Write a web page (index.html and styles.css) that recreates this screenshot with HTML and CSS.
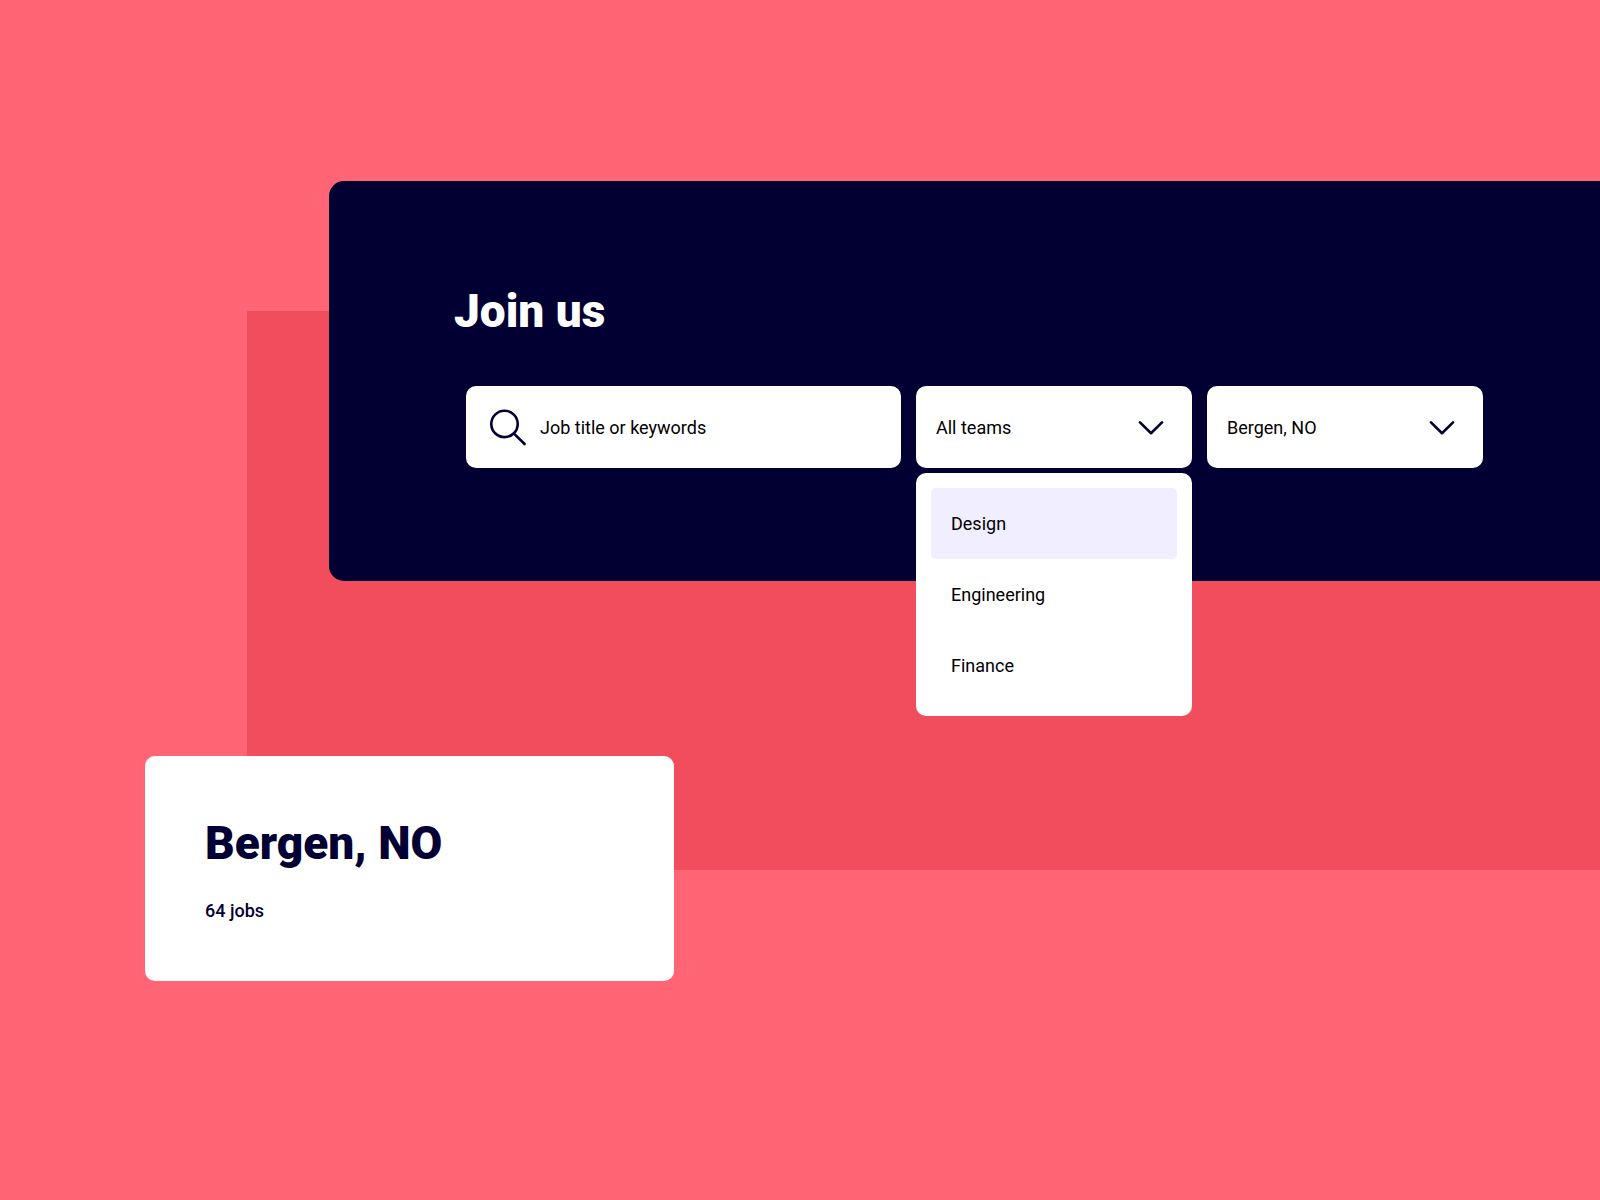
FILE: index.html
```html
<!DOCTYPE html>
<html lang="en">
<head>
    <meta charset="UTF-8">
    <meta name="viewport" content="width=device-width, initial-scale=1.0">
    <title>Join us</title>
    <link rel="stylesheet" href="styles.css">
</head>
<body>
    <main class="page">
        <div class="backdrop"></div>

        <section class="hero">
            <h1 class="title">Join us</h1>
            <form class="filters">
                <label class="field search">
                    <svg class="search-icon" viewBox="0 0 36 36" aria-hidden="true">
                        <circle cx="14.5" cy="14.9" r="13.2"/>
                        <path d="M24 24.6L34.6 35"/>
                    </svg>
                    <input type="text" placeholder="Job title or keywords" aria-label="Job title or keywords">
                </label>

                <div class="dropdown">
                    <label class="field select">
                        <select aria-label="Team">
                            <option>All teams</option>
                            <option>Design</option>
                            <option>Engineering</option>
                            <option>Finance</option>
                        </select>
                        <svg class="chevron" viewBox="0 0 26 16" aria-hidden="true">
                            <path d="M2 3.4L13 14.2L24 3.4"/>
                        </svg>
                    </label>
                    <ul class="menu">
                        <li><button type="button" class="option active">Design</button></li>
                        <li><button type="button" class="option">Engineering</button></li>
                        <li><button type="button" class="option">Finance</button></li>
                    </ul>
                </div>

                <div class="dropdown">
                    <label class="field select">
                        <select aria-label="Location">
                            <option>Bergen, NO</option>
                        </select>
                        <svg class="chevron" viewBox="0 0 26 16" aria-hidden="true">
                            <path d="M2 3.4L13 14.2L24 3.4"/>
                        </svg>
                    </label>
                </div>
            </form>
        </section>

        <section class="card">
            <h2 class="title">Bergen, NO</h2>
            <p class="card-count">64 jobs</p>
        </section>
    </main>
</body>
</html>
```
FILE: styles.css
```css
* {
    box-sizing: border-box;
}
body {
    font-family: Roboto, Arial, sans-serif;
    font-size: 18px;
    margin: 0;
    background-color: #ff6575;
    color: #000;
}
.page {
    display: grid;
    grid-template-columns: 145px 102px 82px 345px 1fr;
    grid-template-rows: 130px auto 175px 114px auto;
    padding: 181px 0 60px;
}
.backdrop {
    grid-column: 3 / -1;
    grid-row: 2 / 5;
    background-color: #f24d5c;
}
.hero {
    grid-column: 4 / -1;
    grid-row: 1 / 3;
    z-index: 1;
    padding: 103px 117px 113px 125px;
    background-color: #020033;
    border-radius: 15px 0 0 15px;
}
.title {
    margin: 0;
    font-size: 46px;
    line-height: 54px;
    font-weight: 900;
}
.hero .title {
    color: white;
}
.filters {
    display: flex;
    gap: 15px;
    margin: 48px 0 0 12px;
}
.field {
    height: 82px;
    background-color: white;
    border-radius: 10px;
}
.field input,
.field select {
    width: 100%;
    height: 100%;
    border: none;
    outline: none;
    background: none;
    font: inherit;
    color: inherit;
}
.search {
    flex: 1;
    display: flex;
    align-items: center;
    gap: 14px;
    padding: 0 24px;
}
.search input {
    min-width: 0;
    padding: 0;
}
.search input::placeholder {
    color: #000;
    opacity: 1;
}
.search-icon {
    flex: none;
    width: 36px;
    height: 36px;
    overflow: visible;
}
.search-icon,
.chevron {
    fill: none;
    stroke: #020033;
    stroke-width: 2.6;
    stroke-linecap: round;
    stroke-linejoin: round;
}
.dropdown {
    position: relative;
    flex: 0 0 276px;
}
.select {
    display: grid;
    align-items: center;
}
.select select {
    grid-area: 1 / 1;
    appearance: none;
    padding: 0 60px 0 20px;
    cursor: pointer;
}
.chevron {
    grid-area: 1 / 1;
    justify-self: end;
    width: 26px;
    height: 16px;
    margin-right: 28px;
    pointer-events: none;
}
.menu {
    position: absolute;
    top: 100%;
    left: 0;
    right: 0;
    margin: 5px 0 0;
    padding: 15px;
    list-style: none;
    background-color: white;
    border-radius: 10px;
}
.option {
    display: block;
    width: 100%;
    height: 71px;
    padding: 0 20px;
    border: none;
    border-radius: 5px;
    background: none;
    font: inherit;
    color: inherit;
    text-align: left;
    cursor: pointer;
}
.option.active,
.option:hover {
    background-color: #f0eeff;
}
.card {
    grid-column: 2 / 5;
    grid-row: 4 / 6;
    z-index: 1;
    padding: 60px;
    background-color: white;
    border-radius: 10px;
    color: #020033;
}
.card-count {
    margin: 30px 0 0;
    line-height: 21px;
    font-weight: 500;
}
```
